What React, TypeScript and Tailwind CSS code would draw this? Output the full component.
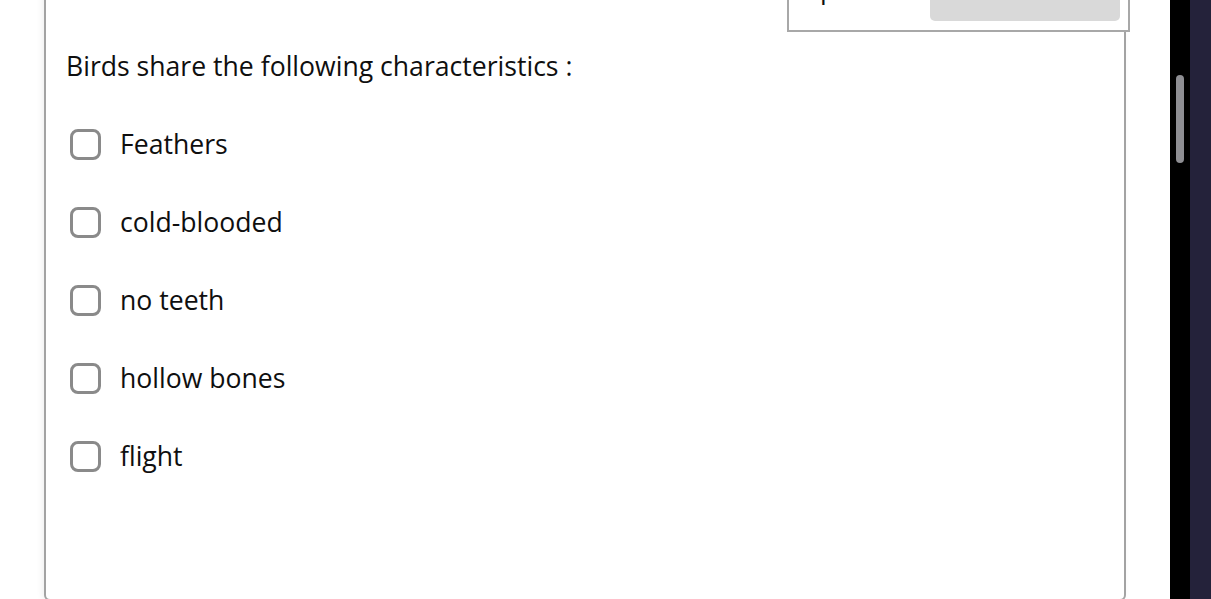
import React from "react";

const options = ["Feathers", "cold-blooded", "no teeth", "hollow bones", "flight"];

const Checkbox = () => (
  <span className="block h-[31px] w-[31px] shrink-0 rounded-[8px] border-[3px] border-[#8a8a8a] bg-white" />
);

export default function App() {
  return (
    <div
      className="flex h-[599px] w-[1211px] overflow-hidden bg-white text-[#0f0f0f]"
      style={{ fontFamily: '"Open Sans", "Noto Sans", sans-serif' }}
    >
      <main className="relative flex-1 overflow-hidden bg-white">
        <section className="ml-[44px] mt-[-60px] h-[661px] w-[1082px] rounded-b-[6px] border-2 border-[#a3a3a3] bg-white pl-[20px] pt-[106px] shadow-[-2px_0_6px_rgba(0,0,0,0.06)]">
          <p className="text-[26.6px] leading-[36px]">Birds share the following characteristics :</p>
          <ul className="mt-[40px] flex flex-col gap-[38px]">
            {options.map((o) => (
              <li key={o} className="flex h-[40px] items-center gap-[19px] pl-[4px]">
                <Checkbox />
                <span className="text-[26.6px] leading-[36px]">{o}</span>
              </li>
            ))}
          </ul>
        </section>

        {/* header panel that overlaps the card top */}
        <div className="absolute left-[787px] top-[-40px] h-[72px] w-[343px] border-2 border-[#a8a8a8] bg-white">
          <span className="absolute left-[31px] top-[8px] text-[26.6px] leading-[36px]">p</span>
          <div className="absolute right-[8px] top-0 h-[59px] w-[190px] rounded-[5px] bg-[#d9d9d9]" />
        </div>
      </main>

      <div className="relative h-full w-[20px] bg-black">
        <div className="absolute left-[6px] top-[75px] h-[88px] w-[8px] rounded-full bg-[#8e8e93]" />
      </div>
      <div className="h-full w-[21px] bg-[#24223a]" />
    </div>
  );
}
